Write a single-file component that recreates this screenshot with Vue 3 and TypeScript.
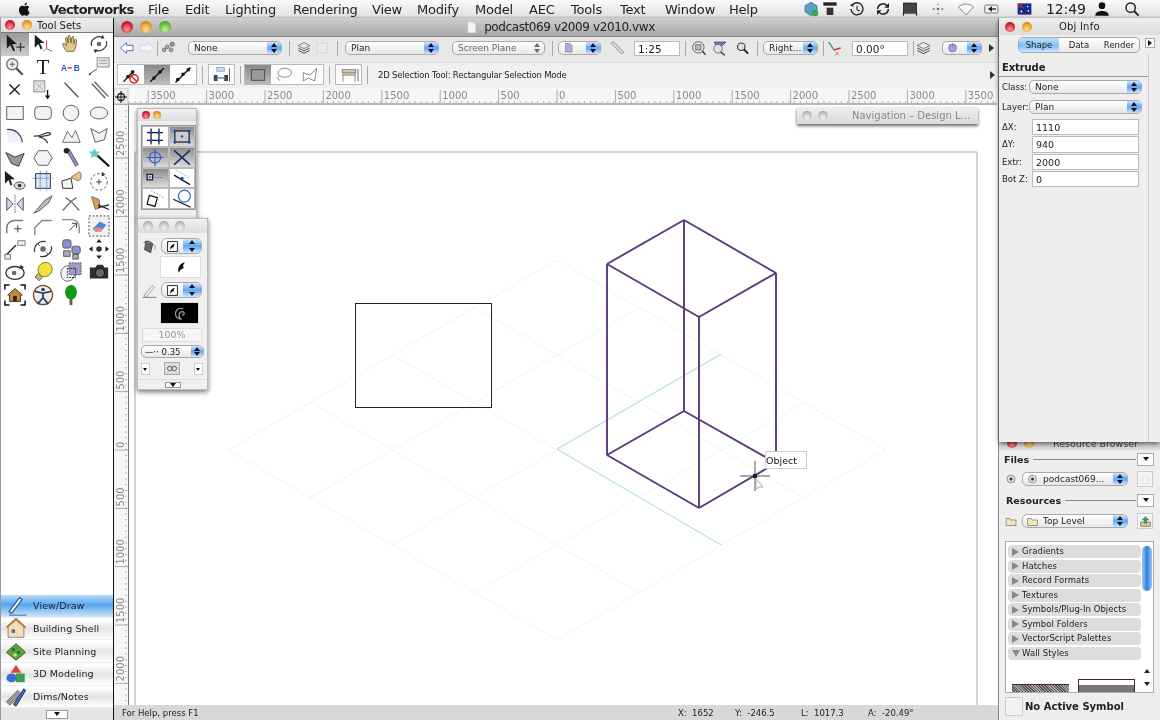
<script setup lang="ts">
type Item = { k: string; x: number; w: number; t?: string; ic?: string; lead?: string; plain?: boolean };

const I: Record<string, string> = {
  select: '<path d="M3 2v15l4-4 3 7 2-1-3-7h5z" fill="#1c1c1c"/><path d="M18 11v9M13.500 15.500h9" stroke="#333" stroke-width="1.300" fill="none"/>',
  reshape: '<path d="M3 2v14l4-4 2.500 6 2-1-3-6h5z" fill="#1c1c1c"/><path d="M16 8v9" stroke="#b33"/><path d="M16 17l6 3" stroke="#27a"/><path d="M16 17l-4 3" stroke="#3a4"/>',
  hand: '<path d="M7 20c-2-3-4-6-4-8 0-1 2-1 3 1l1 1-1-8c0-2 2-2 2 0l1 5 0-7c0-2 2-2 2 0l1 7 1-6c0-2 2-2 2 0l0 7 1-4c1-2 2-1 2 0 0 5-1 9-3 12z" fill="#e3c58e" stroke="#6b5328" stroke-width=".9"/>',
  rotate: '<circle cx="12" cy="12" r="2.500" fill="#667"/><path d="M4 14c-2-7 6-12 12-9M20 9c2 7-6 12-12 10" fill="none" stroke="#333" stroke-width="1.300"/><path d="M16 2l2 4-4 0zM8 22l-2-4 4 0z" fill="#333"/>',
  zoom: '<circle cx="9" cy="9" r="6" fill="#eef" stroke="#777" stroke-width="1.500"/><path d="M13.500 13.500l7 7" stroke="#555" stroke-width="2.500"/><path d="M9 6v6M6 9h6" stroke="#555"/>',
  text: '<text x="12" y="20" text-anchor="middle" font-family="Liberation Serif, serif" font-size="23" fill="#222">T</text>',
  ab: '<text x="1" y="16" font-family="Liberation Sans, sans-serif" font-size="9" fill="#25c" font-weight="700">A</text><path d="M8 13h5" stroke="#d33" stroke-width="1.500"/><text x="15" y="16" font-family="Liberation Sans, sans-serif" font-size="9" fill="#25c" font-weight="700">B</text>',
  note: '<rect x="10" y="2" width="13" height="10" fill="#e8e8e8" stroke="#888"/><path d="M12 5h9M12 8h9" stroke="#999"/><path d="M1 20l9-6" stroke="#444"/><circle cx="2" cy="20" r="1" fill="#222"/>',
  x: '<path d="M6 6l11 11M17 6L6 17" stroke="#222" stroke-width="1.600"/>',
  boxdown: '<rect x="2" y="2" width="12" height="12" fill="#e4e4e4" stroke="#888"/><path d="M4 4l8 8M12 4l-8 8" stroke="#aaa"/><path d="M17 12v9" stroke="#111" stroke-width="1.500"/><path d="M14 18h6l-3 4z" fill="#111"/>',
  line: '<path d="M5 4l15 16" stroke="#555" stroke-width="1.500"/>',
  dline: '<path d="M4 5l15 16M7 3l15 16" stroke="#666" stroke-width="1.500"/>',
  rect: '<rect x="3" y="5" width="18" height="14" fill="#f3f3f7" stroke="#555"/>',
  rrect: '<rect x="3" y="5" width="18" height="14" rx="4" fill="#f3f3f7" stroke="#555"/>',
  circle: '<circle cx="12" cy="12" r="8.500" fill="#f3f3f7" stroke="#555"/>',
  ellipse: '<ellipse cx="12" cy="12" rx="9.500" ry="6.500" fill="#f3f3f7" stroke="#555"/>',
  arc: '<path d="M3 6c9-1 16 5 17 14H5z" fill="#eef" stroke="none"/><path d="M3 6c9-1 16 5 17 14" fill="none" stroke="#444" stroke-width="1.300"/>',
  free: '<path d="M2 13c6 2 14-6 18-3 2 3-10 3-12 4 4 1 8 3 9 7" fill="none" stroke="#333" stroke-width="1.300"/>',
  polyline: '<path d="M3 20L8 8l5 7 4-8 5 13z" fill="#f1f1f5" stroke="#666"/>',
  polygon: '<path d="M3 5l9 5 9-5-3 12-10 3z" fill="#f1f1f5" stroke="#555"/>',
  dpoly: '<path d="M2 6l10 5 10-4-6 14-8-3z" fill="#999" stroke="#333"/>',
  hex: '<path d="M7 4h10l5 8-5 8H7l-5-8z" fill="#f3f3f7" stroke="#555"/>',
  dropper: '<path d="M6 4l4-2 3 5 7 12-3 2-7-12z" fill="#9a84c4" stroke="#444" stroke-width=".8"/><circle cx="7" cy="4" r="3" fill="#222"/>',
  wand: '<path d="M10 9l13 12" stroke="#111" stroke-width="2.500"/><path d="M7 1l2 4 4 0-3 3 1 4-4-2-4 2 1-4-3-3 4 0z" fill="#6cc"/>',
  eye: '<path d="M1 1v14l4-4 2 6 2-1-2-6h5z" fill="#1c1c1c"/><ellipse cx="17" cy="17" rx="6" ry="4" fill="#ddd" stroke="#444"/><circle cx="17" cy="17" r="2" fill="#333"/>',
  boxblue: '<rect x="4" y="4" width="16" height="16" fill="#dce6f2" stroke="#225"/><path d="M9 1v22M16 1v22M1 9h22" stroke="#48c" stroke-dasharray="2 1" fill="none"/>',
  handpoly: '<path d="M2 12l10-3 2 11H3z" fill="#f4f4f4" stroke="#222"/><path d="M12 8l9-6c3 1 3 8-1 10z" fill="#e3c58e" stroke="#6b5328" stroke-width=".8"/>',
  rotc: '<circle cx="12" cy="13" r="9" fill="none" stroke="#555" stroke-dasharray="3 2"/><path d="M12 10v6M9 13h6" stroke="#333"/><path d="M15 2l4 3-4 2z" fill="#333"/>',
  mirror: '<path d="M12 2v20" stroke="#567" stroke-dasharray="2 1"/><path d="M3 5l7 7-7 7zM21 5l-7 7 7 7z" fill="#d0d6e6" stroke="#445"/>',
  knife: '<path d="M2 22L14 8l8-5-4 8-11 9z" fill="#bbb" stroke="#555"/>',
  chev: '<path d="M3 19L12 9l9 10M6 5l6 4 6-4" fill="none" stroke="#777" stroke-width="1.600"/>',
  scissor: '<path d="M4 4l8 3 1 9-5 2z" fill="#d9a050" stroke="#765"/><path d="M11 16l12-3M11 13l12 5" stroke="#222" stroke-width="1.300"/>',
  fillet: '<path d="M3 20v-6c0-5 4-8 9-8h9" fill="none" stroke="#777" stroke-width="1.600"/><path d="M15 11v8M11 15h8" stroke="#333"/>',
  chamfer: '<path d="M3 22v-8l8-8h11" fill="none" stroke="#888" stroke-width="1.500"/>',
  filletb: '<path d="M2 5h11c5 0 8 4 8 9v6" fill="none" stroke="#888" stroke-width="1.500"/><path d="M10 17l7-7M13 9h5v5" fill="none" stroke="#333"/>',
  eraser: '<rect x="1" y="1" width="22" height="22" fill="#f2f2f2" stroke="#333" stroke-dasharray="2 2"/><path d="M5 15l8-8 7 4-6 7H8z" fill="#4a86d8"/><path d="M5 15l3 3h6l2-3-5-2z" fill="#e88"/>',
  wline: '<path d="M1 20l12-12" stroke="#222" stroke-width="1.500"/><rect x="15" y="3" width="8" height="5" fill="#eee" stroke="#777"/><rect x="1" y="18" width="6" height="5" fill="#eee" stroke="#777"/>',
  orbit: '<circle cx="12" cy="12" r="3" fill="#667"/><path d="M3 15C1 9 8 2 15 4M21 9c2 6-5 13-12 11" fill="none" stroke="#333" stroke-width="1.300"/><path d="M6 6l3 3M18 18l-3-3" stroke="#667"/>',
  group: '<rect x="3" y="2" width="9" height="9" rx="2" fill="#8a92cc" stroke="#555"/><rect x="13" y="9" width="9" height="8" rx="2" fill="#8a92cc" stroke="#555"/><rect x="4" y="14" width="7" height="6" fill="#aab" stroke="#555"/><rect x="14" y="18" width="6" height="5" fill="#aab" stroke="#555"/>',
  move4: '<circle cx="12" cy="12" r="3" fill="#333"/><path d="M12 1l3 4H9zM12 23l3-4H9zM1 12l4-3v6zM23 12l-4-3v6z" fill="#222"/>',
  fly: '<ellipse cx="12" cy="13" rx="10" ry="7" fill="none" stroke="#333" stroke-width="1.400"/><circle cx="11" cy="13" r="2.500" fill="#667"/><path d="M18 4l4 3-5 2z" fill="#333"/>',
  bulb: '<g transform="rotate(40 12 12)"><ellipse cx="12" cy="8.500" rx="7.500" ry="8" fill="#f4e23c" stroke="#8a7c14"/><rect x="9" y="16.500" width="6" height="5.500" fill="#c8b860" stroke="#776"/></g>',
  teapot: '<path d="M1 13c0-5 5-8 9-8s7 4 6 9-3 8-8 8-7-5-7-9z" fill="#f8f8f8" stroke="#555"/><path d="M10 2h13v13H10z" fill="#a29ac0" stroke="#556" stroke-dasharray="2 1"/><path d="M8 8h9v10H8z" fill="none" stroke="#223" stroke-dasharray="2 1"/>',
  camera: '<path d="M2 7h6l2-3h6l2 3h4v12H2z" fill="#2e2e2e"/><circle cx="13" cy="13" r="5" fill="#666" stroke="#111"/>',
  house: '<path d="M1 6V1h5M18 1h5v5M23 18v5h-5M6 23H1v-5" fill="none" stroke="#111" stroke-width="1.600"/><path d="M4 12l8-7 8 7h-2v7H6v-7z" fill="#c08a42" stroke="#4a2f10"/><rect x="10" y="13" width="4" height="6" fill="#3a2408"/>',
  vitr: '<circle cx="12" cy="12" r="10.500" fill="#f4eee0" stroke="#6b4a22" stroke-width="1.400"/><circle cx="12" cy="6" r="2" fill="#26447a"/><path d="M3 8l9 2 9-2M12 10v5M12 15l-6 7M12 15l6 7" stroke="#26447a" stroke-width="2" fill="none"/>',
  tree: '<rect x="10.500" y="14" width="3" height="9" fill="#6a5a2a"/><ellipse cx="12" cy="9" rx="6.500" ry="8" fill="#129a18"/>',
  pen: '<path d="M4 19L16 3l3 2L7 21z" fill="#fff" stroke="#2a5a9c" stroke-width="1.400"/><path d="M4 23h20" stroke="#2a5a9c"/>',
  bshell: '<path d="M3 10L12 2l9 8v12H3z" fill="#f2e0bc" stroke="#876"/><path d="M1 11L12 1l11 10" fill="none" stroke="#b97b32" stroke-width="2.200"/><rect x="7" y="13" width="4" height="4" fill="#667"/>',
  site: '<path d="M1 13L12 3l11 10-11 9z" fill="#5da336" stroke="#5a4a22"/><circle cx="9" cy="10" r="2" fill="#174"/><circle cx="15" cy="13" r="2" fill="#174"/><circle cx="11" cy="16" r="2" fill="#cda"/>',
  model: '<path d="M6 11l6-9 6 9z" fill="#d8423c"/><path d="M12 22l0-10 10 0 0 10z" fill="#3aa04a"/><ellipse cx="7" cy="17" rx="6" ry="5" fill="#3a6fd0"/>',
  dims: '<path d="M1 18L14 5l4 4L5 22z" fill="#999" stroke="#666"/><path d="M9 21L21 3l2 2L12 23z" fill="#3a6fd0" stroke="#224"/>',
  back: '<path d="M2 12l9-8v4h10v8H11v4z" fill="#fff" stroke="#4a58b8" stroke-width="1.300"/>',
  fwd: '<path d="M22 12l-9-8v4H3v8h10v4z" fill="#f6f6fa" stroke="#d4d6ea" stroke-width="1.300"/>',
  classes: '<circle cx="18" cy="6" r="3.500" fill="#999" stroke="#555"/><circle cx="10" cy="10" r="3" fill="#aaa" stroke="#555"/><circle cx="16" cy="15" r="3" fill="#aaa" stroke="#555"/><circle cx="5" cy="15" r="3" fill="#aaa" stroke="#555"/>',
  layers: '<path d="M12 3l10 5-10 5L2 8z" fill="#eee" stroke="#333"/><path d="M2 12l10 5 10-5M2 16l10 5 10-5" fill="none" stroke="#333" stroke-width="1.400"/>',
  dis: '<rect x="3" y="4" width="18" height="16" fill="#eee" stroke="#ccc"/><path d="M8 8h8v8H8z" fill="none" stroke="#ddd"/>',
  ruler: '<path d="M3 5l3-3 16 16-3 3z" fill="#ddd" stroke="#666"/>',
  zm1: '<circle cx="11" cy="11" r="8.500" fill="#eee" stroke="#444" stroke-width="1.300"/><path d="M7 7h8v8H7z" fill="#bbb" stroke="#444"/><path d="M17 17l5 5" stroke="#333" stroke-width="2"/>',
  zm2: '<path d="M3 3h18L10 14z" fill="#6b7ac0" stroke="#345"/><circle cx="9" cy="13" r="6.500" fill="#dde" stroke="#444"/><path d="M13 18l6 5" stroke="#333" stroke-width="2"/>',
  zm3: '<circle cx="10" cy="10" r="6" fill="#dde" stroke="#333" stroke-width="1.800"/><path d="M14 14l7 7" stroke="#222" stroke-width="3"/>',
  axes: '<path d="M4 3l8 12" stroke="#2a8a6a" stroke-width="2"/><path d="M12 15l10-3" stroke="#c33" stroke-width="2"/><path d="M14 18l5 5M19 18l-5 5" stroke="#c33"/>',
  page: '<path d="M6 3h9l4 4v13H6z" fill="#b8a8de" stroke="#6a5aa0"/>',
  flower: '<circle cx="12" cy="12" r="8" fill="#a99ad8" stroke="#6a5aa0"/><path d="M7 4v5M12 2v7M17 4v5" stroke="#6a5aa0"/>',
  noM: '<path d="M2 21L16 6" stroke="#222" stroke-width="2"/><circle cx="8" cy="14" r="2.500" fill="#222"/><circle cx="14" cy="8" r="2.500" fill="#222"/><circle cx="16" cy="17" r="5.500" fill="#fff" stroke="#d22" stroke-width="2"/><path d="M12 13l8 8" stroke="#d22" stroke-width="2"/>',
  two: '<path d="M3 21L21 3" stroke="#111" stroke-width="2"/><rect x="6" y="14" width="4" height="4" fill="#111"/><rect x="14" y="6" width="4" height="4" fill="#111"/>',
  three: '<path d="M2 22L22 2" stroke="#111" stroke-width="2"/><rect x="3" y="16" width="4" height="4" fill="#111"/><rect x="10" y="9" width="4" height="4" fill="#111"/><rect x="17" y="3" width="4" height="4" fill="#111"/>',
  mrect: '<rect x="3" y="5" width="18" height="14" fill="#9a9a9a" stroke="#333"/>',
  mlasso: '<ellipse cx="13" cy="9" rx="9" ry="6" fill="#fff" stroke="#666"/><path d="M6 13c-3 1-3 6 1 6" fill="none" stroke="#666"/>',
  mpoly: '<path d="M3 9l9 3 9-9-3 17-8-4-7 4z" fill="#fff" stroke="#666"/>',
  wallh: '<rect x="3" y="5" width="18" height="4" fill="#ccc" stroke="#666"/><path d="M4 9v12M20 9v12M3 12h18" stroke="#666"/><rect x="4" y="9" width="16" height="4" fill="#c8b48c"/><path d="M24 4v16" stroke="#333"/>',
  dimh: '<rect x="5" y="2" width="10" height="5" fill="#bde" stroke="#79b"/><rect x="1" y="12" width="5" height="8" fill="#444"/><rect x="15" y="12" width="5" height="8" fill="#444"/><path d="M6 16h9" stroke="#58c" stroke-width="2"/><path d="M22 3v18" stroke="#333"/>',
  apple: '<path d="M16.500 12.800c0-2.500 2-3.600 2.100-3.700-1.200-1.700-3-1.900-3.600-2-1.500-.2-3 .9-3.800.9s-2-.9-3.300-.9c-1.700 0-3.300 1-4.100 2.500-1.800 3-.5 7.600 1.200 10 .8 1.200 1.800 2.600 3.100 2.500 1.200 0 1.700-.8 3.200-.8s1.900.8 3.200.8 2.200-1.200 3-2.400c1-1.400 1.300-2.700 1.400-2.800-.1 0-2.400-1-2.400-4.100zM14 5.400c.7-.8 1.100-1.900 1-3-.9 0-2.100.6-2.800 1.400-.6.700-1.100 1.800-1 2.900 1.100.1 2.100-.5 2.800-1.300z" fill="#111"/>',
  globe: '<path d="M12 2l9 5v9l-9 6-9-6V7z" fill="#5aa0c8" stroke="#2a5a78"/><circle cx="18" cy="18" r="5" fill="#3aa84a"/>',
  lamp: '<path d="M2 2h20v5H2z" fill="#222"/><path d="M7 10h10v11H7z" fill="#333"/>',
  tm: '<path d="M5 6a9 9 0 1 1-2 6" fill="none" stroke="#222" stroke-width="2"/><path d="M1 6l5-2 1 5z" fill="#222"/><path d="M12 7v6l4 2" stroke="#222" stroke-width="1.600" fill="none"/>',
  sync: '<path d="M4 12a8 8 0 0 1 14-5M20 12a8 8 0 0 1-14 5" fill="none" stroke="#222" stroke-width="2.400"/><path d="M21 3v7h-7zM3 21v-7h7z" fill="#222"/>',
  screen: '<rect x="2" y="3" width="20" height="14" fill="#444" stroke="#111"/><path d="M2 17v5M22 17v5" stroke="#111" stroke-width="1.500"/><path d="M2 19h20" stroke="#111"/>',
  bt: '<circle cx="12" cy="12" r="2" fill="#666"/><path d="M12 4v2M12 18v2M4 12h3M17 12h3" stroke="#777" stroke-width="2"/>',
  wifi: '<path d="M1 9c6-6 16-6 22 0L12 21z" fill="#fafafa" stroke="#555"/>',
  batt: '<rect x="1" y="6" width="20" height="12" rx="2" fill="#eee" stroke="#444"/><path d="M6 12l6-4v8z" fill="#222"/><path d="M12 11h6v2h-6z" fill="#222"/>',
  flag: '<rect x="1" y="3" width="22" height="18" fill="#1a2a8a"/><path d="M1 3l10 8M11 3L1 11" stroke="#e33" stroke-width="1.500"/><circle cx="17" cy="8" r="1.300" fill="#fff"/><circle cx="18" cy="15" r="1.300" fill="#fff"/><circle cx="7" cy="16" r="1.500" fill="#fff"/>',
  user: '<circle cx="12" cy="7" r="5" fill="#111"/><path d="M2 22c0-6 6-7 10-7s10 1 10 7z" fill="#111"/>',
  spot: '<circle cx="10" cy="10" r="7" fill="none" stroke="#222" stroke-width="2.200"/><path d="M15 15l7 7" stroke="#222" stroke-width="2.800"/>',
  grid: '<path d="M2 7h20M2 17h20M7 2v20M17 2v20" stroke="#111" stroke-width="1.500"/><g fill="#1a4ac8"><circle cx="7" cy="7" r="2"/><circle cx="17" cy="7" r="2"/><circle cx="7" cy="17" r="2"/><circle cx="17" cy="17" r="2"/></g>',
  rbox: '<rect x="3" y="5" width="18" height="14" fill="#ccc" stroke="#111" stroke-width="1.400"/><g fill="#1a4ac8"><circle cx="3" cy="5" r="2"/><circle cx="21" cy="5" r="2"/><circle cx="3" cy="19" r="2"/><circle cx="21" cy="19" r="2"/><circle cx="12" cy="12" r="1.500"/></g>',
  cross: '<circle cx="12" cy="12" r="7" fill="none" stroke="#2a5ac8" stroke-width="1.400"/><path d="M12 1v22M1 12h22" stroke="#2a5ac8" stroke-width="1.400"/>',
  bx: '<path d="M2 3l20 18M2 21L22 3" stroke="#1a2a5a" stroke-width="1.800"/>',
  dashb: '<rect x="2" y="8" width="7" height="7" fill="#ccd" stroke="#111" stroke-width="1.400"/><rect x="4.500" y="10.500" width="2" height="2" fill="#24c"/><path d="M11 12h12" stroke="#36c" stroke-dasharray="2 2"/>',
  bline: '<path d="M2 9l20 12" stroke="#111" stroke-width="1.600"/><path d="M5 3l15 9" stroke="#58c" stroke-dasharray="2 2"/><circle cx="12" cy="13" r="2" fill="#24c"/>',
  sq: '<path d="M5 8l10 3-3 11-10-3z" fill="#fff" stroke="#111" stroke-width="1.500"/><path d="M7 2l16 9" stroke="#58c" stroke-dasharray="2 2"/>',
  cl: '<circle cx="15" cy="9" r="7.500" fill="none" stroke="#2a6ac8" stroke-width="1.500"/><path d="M1 13l22 10" stroke="#111" stroke-width="1.600"/>',
  paint: '<path d="M6 5l11 3-3 14-10-5z" fill="#666" stroke="#222"/><path d="M3 6c2-4 11-3 14 2" fill="none" stroke="#222" stroke-width="1.500"/><path d="M17 8c5 2 5 8 3 10" stroke="#888" fill="none" stroke-width="1.500"/>',
  pencil: '<path d="M3 20L16 4l4 3L7 22z" fill="#eee" stroke="#777"/><path d="M1 23h22" stroke="#777" stroke-width="1.500"/>',
  doc: '<circle cx="12" cy="12" r="8" fill="#ddd" stroke="#555"/><circle cx="12" cy="12" r="3" fill="#335"/>',
  folder: '<path d="M2 7h7l2 3h11v11H2z" fill="#f2e6b8" stroke="#444"/>',
  homeD: '<path d="M3 12L12 4l9 8M6 11v9h12v-9" fill="none" stroke="#ddd" stroke-width="1.400"/>',
  upfolder: '<path d="M3 13h18v8H3z" fill="#d8cc90" stroke="#444"/><path d="M12 3l6 6h-4v6h-4V9H6z" fill="#3aa84a" stroke="#265"/>',
  swatchA: '<rect x="3" y="3" width="18" height="18" fill="#fff" stroke="#111" stroke-width="1.600"/><path d="M8 18c-1-6 3-10 9-11-3 3-3 5-2 6-2 0-5 2-7 5z" fill="#111"/>',
  link: '<path d="M2 12a5 5 0 0 1 10 0 5 5 0 0 1-10 0M12 12a5 5 0 0 1 10 0 5 5 0 0 1-10 0" fill="none" stroke="#555" stroke-width="2"/>'
};

const tools: string[] = [
  'select','reshape','hand','rotate','zoom','text','ab','note','x','boxdown','line','dline',
  'rect','rrect','circle','ellipse','arc','free','polyline','polygon','dpoly','hex','dropper','wand',
  'eye','boxblue','handpoly','rotc','mirror','knife','chev','scissor','fillet','chamfer','filletb','eraser',
  'wline','orbit','group','move4','fly','bulb','teapot','camera','house','vitr','tree'
];

const sets = [
  { t: 'View/Draw', ic: 'pen', on: true },
  { t: 'Building Shell', ic: 'bshell', on: false },
  { t: 'Site Planning', ic: 'site', on: false },
  { t: '3D Modeling', ic: 'model', on: false },
  { t: 'Dims/Notes', ic: 'dims', on: false }
];

const menuX = [49, 148, 185, 225, 293, 372, 417, 475, 529, 571, 620, 665, 729, 803];
const menuT = ['Vectorworks','File','Edit','Lighting','Rendering','View','Modify','Model','AEC','Tools','Text','Window','Help'];
const menus = menuT.map((t, i) => ({ t, w: menuX[i + 1] - menuX[i] }));
const trayIcons = [
  { ic: 'globe', w: 19 }, { ic: 'lamp', w: 27 }, { ic: 'tm', w: 26 }, { ic: 'sync', w: 27 },
  { ic: 'screen', w: 28 }, { ic: 'bt', w: 28 }, { ic: 'wifi', w: 26 }, { ic: 'batt', w: 33 }
];

const raw: Item[] = [
  { k: 'i', x: 119, w: 16, ic: 'back' }, { k: 'i', x: 139, w: 16, ic: 'fwd' }, { k: 's', x: 157, w: 1 },
  { k: 'i', x: 161, w: 15, ic: 'classes' }, { k: 'p', x: 188, w: 94, t: 'None' }, { k: 's', x: 289, w: 1 },
  { k: 'i', x: 297, w: 14, ic: 'layers' }, { k: 'i', x: 316, w: 13, ic: 'dis' }, { k: 's', x: 337, w: 1 },
  { k: 'p', x: 345, w: 94, t: 'Plan' }, { k: 'p', x: 452, w: 93, t: 'Screen Plane', plain: true }, { k: 's', x: 552, w: 1 },
  { k: 'p', x: 558, w: 43, lead: 'page' }, { k: 'i', x: 609, w: 16, ic: 'ruler' }, { k: 'f', x: 634, w: 46, t: '1:25' },
  { k: 's', x: 685, w: 1 }, { k: 'i', x: 691, w: 16, ic: 'zm1' }, { k: 'i', x: 712, w: 16, ic: 'zm2' },
  { k: 'i', x: 735, w: 15, ic: 'zm3' }, { k: 's', x: 757, w: 1 }, { k: 'p', x: 763, w: 55, t: 'Right...' },
  { k: 's', x: 823, w: 1 }, { k: 'i', x: 826, w: 16, ic: 'axes' }, { k: 'f', x: 852, w: 56, t: '0.00°' },
  { k: 's', x: 913, w: 1 }, { k: 'i', x: 916, w: 15, ic: 'layers' }, { k: 'p', x: 942, w: 40, lead: 'flower' },
  { k: 'a', x: 989, w: 5 }
];
const bar = raw.map((it, i) => {
  const prev = i ? raw[i - 1].x + raw[i - 1].w : 114;
  return { ...it, ml: it.x - prev };
});

const topTicks = Array.from({ length: 15 }, (_, i) => {
  const v = i - 7;
  return { x: 557 + v * 58.4, t: String(Math.abs(v) * 500) };
});
const minorTop = Array.from({ length: 152 }, (_, i) => 129 + i * 5.84);
const leftLabels = [
  { y: 158, t: '2500' }, { y: 216.6, t: '2000' }, { y: 275, t: '1500' }, { y: 333.4, t: '1000' },
  { y: 391.6, t: '500' }, { y: 450, t: '0' }, { y: 508.4, t: '500' }, { y: 566.6, t: '1000' },
  { y: 625, t: '1500' }, { y: 683.4, t: '2000' }
];
const minorLeft = Array.from({ length: 104 }, (_, i) => 105 + i * 5.84);

const L = [228, 450], T = [557, 260], R = [886, 450], B = [557, 640];
const lerp = (a: number[], b: number[], f: number) => [a[0] + (b[0] - a[0]) * f, a[1] + (b[1] - a[1]) * f];
const grid: number[][] = [];
for (let i = 0; i <= 4; i++) {
  const f = i / 4;
  grid.push([...lerp(L, T, f), ...lerp(B, R, f)]);
  grid.push([...lerp(L, B, f), ...lerp(T, R, f)]);
}
const box = [
  [684,220,607,264],[684,220,776,273],[607,264,699,317],[776,273,699,317],
  [607,264,607,455],[684,220,684,411],[699,317,699,508],[776,273,776,463],
  [607,455,684,411],[684,411,776,463],[607,455,699,508],[699,508,776,463]
];

const resources = ['Gradients','Hatches','Record Formats','Textures','Symbols/Plug-In Objects','Symbol Folders','VectorScript Palettes','Wall Styles'];
const objRows = [
  { l: 'ΔX:', v: '1110' }, { l: 'ΔY:', v: '940' }, { l: 'Extr:', v: '2000' }, { l: 'Bot Z:', v: '0' }
];
const paletteA = [
  { ic: 'grid', on: false }, { ic: 'rbox', on: true }, { ic: 'cross', on: true }, { ic: 'bx', on: true },
  { ic: 'dashb', on: true }, { ic: 'bline', on: false }, { ic: 'sq', on: false }, { ic: 'cl', on: false }
];
</script>

<template>
  <div class="desk">
    <header class="menubar">
      <svg class="apple" viewBox="0 0 24 24" v-html="I.apple"></svg>
      <span v-for="(m, i) in menus" :key="m.t" class="menu" :class="{ brand: i === 0 }" :style="{ width: m.w + 'px' }">{{ m.t }}</span>
      <svg v-for="t in trayIcons" :key="t.ic" class="tray" viewBox="0 0 24 24" :style="{ marginRight: t.w - 16 + 'px' }" v-html="I[t.ic]"></svg>
      <svg class="tray flag" viewBox="0 0 24 24" v-html="I.flag"></svg>
      <span class="clock">12:49</span>
      <svg class="tray user" viewBox="0 0 24 24" v-html="I.user"></svg>
      <svg class="tray spot" viewBox="0 0 24 24" v-html="I.spot"></svg>
    </header>

    <div class="work">
      <aside class="toolsets">
        <div class="ts-title">
          <i class="light red"></i><i class="light orange"></i><span>Tool Sets</span>
        </div>
        <div class="tools">
          <div v-for="(t, i) in tools" :key="i" class="tool" :class="{ pressed: i === 0 }">
            <svg viewBox="0 0 24 24" v-html="I[t]"></svg>
          </div>
        </div>
        <div class="sets">
          <div v-for="s in sets" :key="s.t" class="set" :class="{ on: s.on }">
            <svg viewBox="0 0 24 24" v-html="I[s.ic]"></svg><span>{{ s.t }}</span>
          </div>
        </div>
        <div class="ts-foot"><span class="down-btn"></span></div>
      </aside>

      <main class="win">
        <div class="titlebar">
          <i class="light big red"></i><i class="light big orange"></i><i class="light big green"></i>
          <div class="doc-title">
            <svg viewBox="0 0 24 24"><path d="M5 2h10l5 5v15H5z" fill="#f4f4f4" stroke="#bbb"/></svg>
            <span>podcast069 v2009 v2010.vwx</span>
          </div>
        </div>

        <div class="bar1">
          <template v-for="(b, i) in bar" :key="i">
            <svg v-if="b.k === 'i'" class="bi" viewBox="0 0 24 24" :style="{ marginLeft: b.ml + 'px', width: b.w + 'px' }" v-html="I[b.ic!]"></svg>
            <i v-else-if="b.k === 's'" class="sep" :style="{ marginLeft: b.ml + 'px' }"></i>
            <div v-else-if="b.k === 'p'" class="pop" :class="{ plain: b.plain }" :style="{ marginLeft: b.ml + 'px', width: b.w + 'px' }">
              <svg v-if="b.lead" class="lead" viewBox="0 0 24 24" v-html="I[b.lead]"></svg>
              <span class="pop-t">{{ b.t }}</span>
              <b class="arrows"><u></u><s></s></b>
            </div>
            <div v-else-if="b.k === 'f'" class="field" :style="{ marginLeft: b.ml + 'px', width: b.w + 'px' }">{{ b.t }}</div>
            <i v-else class="tri" :style="{ marginLeft: b.ml + 'px' }"></i>
          </template>
        </div>

        <div class="bar2">
          <div class="seg">
            <button class="sb"><svg viewBox="0 0 24 24" v-html="I.noM"></svg></button>
            <button class="sb dn"><svg viewBox="0 0 24 24" v-html="I.two"></svg></button>
            <button class="sb"><svg viewBox="0 0 24 24" v-html="I.three"></svg></button>
          </div>
          <i class="sep s2"></i>
          <div class="seg one"><button class="sb wide"><svg viewBox="0 0 24 24" v-html="I.dimh"></svg></button></div>
          <i class="sep s2 s3"></i>
          <div class="seg g2">
            <button class="sb dn"><svg viewBox="0 0 24 24" v-html="I.mrect"></svg></button>
            <button class="sb"><svg viewBox="0 0 24 24" v-html="I.mlasso"></svg></button>
            <button class="sb"><svg viewBox="0 0 24 24" v-html="I.mpoly"></svg></button>
          </div>
          <i class="sep s2"></i>
          <div class="seg one"><button class="sb wide"><svg viewBox="0 0 24 24" v-html="I.wallh"></svg></button></div>
          <i class="sep s2"></i>
          <span class="mode">2D Selection Tool: Rectangular Selection Mode</span>
          <i class="tri end"></i>
        </div>

        <div class="ruler-top">
          <svg viewBox="114 88 883 17" width="883" height="17">
            <g stroke="#999" stroke-width=".7">
              <line v-for="x in minorTop" :key="x" :x1="x" :x2="x" y1="101" y2="103" />
            </g>
            <g v-for="t in topTicks" :key="t.x">
              <line :x1="t.x" :x2="t.x" y1="90" y2="103" stroke="#999" stroke-width=".8" />
              <text :x="t.x + 2" y="99" class="rt">{{ t.t }}</text>
            </g>
            <line x1="114" x2="997" y1="104" y2="104" stroke="#777" />
            <rect x="114" y="88" width="14" height="16" fill="#eee" stroke="#999" stroke-width=".5" />
            <circle cx="121" cy="97" r="3.500" fill="none" stroke="#111" stroke-width="1.300" />
            <path d="M121 91v12M115 97h12" stroke="#111" />
          </svg>
        </div>

        <div class="mid">
          <svg class="ruler-left" viewBox="114 105 15 600" width="15" height="600">
            <g stroke="#999" stroke-width=".7">
              <line v-for="y in minorLeft" :key="y" x1="125" x2="127" :y1="y" :y2="y" />
            </g>
            <g v-for="l in leftLabels" :key="l.y">
              <line x1="115" x2="128" :y1="l.y" :y2="l.y" stroke="#999" stroke-width=".8" />
              <text class="rt" :transform="`translate(124 ${l.y - 2}) rotate(-90)`">{{ l.t }}</text>
            </g>
            <line x1="128.500" x2="128.500" y1="105" y2="705" stroke="#777" />
          </svg>

          <div class="canvas">
            <svg class="draw" viewBox="129 105 868 600" width="868" height="600">
              <path d="M135 705V152H977V705" fill="none" stroke="#aaa" />
              <line v-for="(g, i) in grid" :key="i" :x1="g[0]" :y1="g[1]" :x2="g[2]" :y2="g[3]" stroke="#edf7f7" />
              <path d="M721 354L557 449L721 545" fill="none" stroke="#a9d8ea" />
              <rect x="355.500" y="303.500" width="136" height="104" fill="none" stroke="#222" />
              <line v-for="(e, i) in box" :key="'b' + i" :x1="e[0]" :y1="e[1]" :x2="e[2]" :y2="e[3]" stroke="#5a3a78" stroke-width="1.900" />
              <rect x="765.500" y="451.500" width="41" height="17" fill="#fff" stroke="#ccc" />
              <text x="766" y="464" class="tip">Object</text>
              <path d="M740 476h30M755 461v30" stroke="#555" />
              <rect x="753" y="474" width="4" height="4" fill="#124" />
              <path d="M756 479v10l3-2 4 0z" fill="#fff" stroke="#aaa" />
            </svg>

            <section class="pal pal-a">
              <div class="pal-head"><i class="light red sm"></i><i class="light orange sm"></i></div>
              <div class="pal-grid">
                <div v-for="(c, i) in paletteA" :key="i" class="pg" :class="{ on: c.on }">
                  <svg viewBox="0 0 24 24" v-html="I[c.ic]"></svg>
                </div>
              </div>
            </section>

            <section class="pal pal-b">
              <div class="pal-head g"><i class="light grey"></i><i class="light grey"></i><i class="light grey"></i></div>
              <div class="attr-row">
                <svg class="attr-ic" viewBox="0 0 24 24" v-html="I.paint"></svg>
                <div class="pop blk"><svg class="lead sw" viewBox="0 0 24 24" v-html="I.swatchA"></svg><span class="pop-t"></span><b class="arrows"><u></u><s></s></b></div>
              </div>
              <div class="swatch w"><svg viewBox="0 0 24 24"><path d="M8 22c-3-9 3-17 11-18-4 4-4 8-2 10-3 0-7 3-9 8z" fill="#111"/></svg></div>
              <div class="attr-row r2">
                <svg class="attr-ic" viewBox="0 0 24 24" v-html="I.pencil"></svg>
                <div class="pop blk"><svg class="lead sw" viewBox="0 0 24 24" v-html="I.swatchA"></svg><span class="pop-t"></span><b class="arrows"><u></u><s></s></b></div>
              </div>
              <div class="swatch k"><svg viewBox="0 0 24 24"><path d="M17 6a8 8 0 1 0-4 15c-4-5-3-11 3-11 3 0 3 6-1 5" fill="none" stroke="#999" stroke-width="2"/></svg></div>
              <div class="opac">100%</div>
              <div class="pop thick"><span class="pop-t">—·· 0.35</span><b class="arrows"><u></u><s></s></b></div>
              <div class="link-row">
                <span class="mini"></span>
                <button class="lk"><svg viewBox="0 0 24 24" v-html="I.link"></svg></button>
                <span class="mini"></span>
              </div>
              <div class="pal-foot"><span class="down-btn"></span></div>
            </section>

            <section class="nav-pal">
              <i class="light grey"></i><i class="light grey"></i>
              <span>Navigation – Design L...</span>
            </section>
          </div>
        </div>

        <footer class="status">
          <span class="help">For Help, press F1</span>
          <span class="st x">X: &nbsp;1652</span>
          <span class="st y">Y: &nbsp;-246.5</span>
          <span class="st l">L: &nbsp;1017.3</span>
          <span class="st a">A: &nbsp;-20.49°</span>
        </footer>
      </main>

      <div class="right">
        <section class="obj">
          <div class="obj-title"><i class="light red"></i><i class="light orange"></i><span>Obj Info</span></div>
          <div class="tabs-row">
            <div class="tabs"><span class="tab on">Shape</span><span class="tab">Data</span><span class="tab">Render</span></div>
            <i class="tab-menu"></i>
          </div>
          <div class="obj-body">
            <h3>Extrude</h3>
            <div class="lab-row"><label>Class:</label><div class="pop"><span class="pop-t">None</span><b class="arrows"><u></u><s></s></b></div></div>
            <div class="lab-row"><label>Layer:</label><div class="pop"><span class="pop-t">Plan</span><b class="arrows"><u></u><s></s></b></div></div>
            <div class="fields">
              <div v-for="r in objRows" :key="r.l" class="f-row"><label>{{ r.l }}</label><div class="ofield">{{ r.v }}</div></div>
            </div>
          </div>
        </section>

        <section class="res">
          <div class="res-title"><i class="light red"></i><i class="light orange"></i><span>Resource Browser</span></div>
          <div class="res-head"><b>Files</b><i class="rule"></i><span class="menu-btn"></span></div>
          <div class="res-row">
            <svg class="ri" viewBox="0 0 24 24" v-html="I.doc"></svg>
            <div class="pop"><svg class="lead" viewBox="0 0 24 24" v-html="I.doc"></svg><span class="pop-t">podcast069...</span><b class="arrows"><u></u><s></s></b></div>
            <span class="res-btn"><svg viewBox="0 0 24 24" v-html="I.homeD"></svg></span>
          </div>
          <div class="res-head h2"><b>Resources</b><i class="rule"></i><span class="menu-btn"></span></div>
          <div class="res-row">
            <svg class="ri" viewBox="0 0 24 24" v-html="I.folder"></svg>
            <div class="pop"><svg class="lead" viewBox="0 0 24 24" v-html="I.folder"></svg><span class="pop-t">Top Level</span><b class="arrows"><u></u><s></s></b></div>
            <span class="res-btn"><svg viewBox="0 0 24 24" v-html="I.upfolder"></svg></span>
          </div>
          <div class="res-list">
            <div class="res-items">
              <div v-for="(r, i) in resources" :key="r" class="ri-row">
                <i class="disc" :class="{ open: i === resources.length - 1 }"></i>{{ r }}
              </div>
              <div class="thumbs">
                <div class="th a"></div>
                <div class="th b"></div>
              </div>
            </div>
            <div class="scroll">
              <div class="thumb"></div>
              <div class="sc-arrows"><i class="up"></i><i class="dn"></i></div>
            </div>
          </div>
          <div class="res-foot"><span class="nosym"></span><b>No Active Symbol</b></div>
        </section>
      </div>
    </div>
  </div>
</template>

<style scoped>
.desk {
  width: 1160px; height: 720px; overflow: hidden; display: flex; flex-direction: column;
  font-family: "DejaVu Sans", sans-serif; color: #222; background: #fff; filter: blur(.45px);
}
i, b, u, s { display: block; text-decoration: none; font-style: normal; }
.menubar {
  height: 18px; flex: none; display: flex; align-items: center; font-size: 13px;
  background: linear-gradient(#fafafa, #e4e4e4 85%, #bbb); position: relative; z-index: 3;
}
.apple { width: 16px; height: 16px; margin: 0 16px 0 17px; flex: none; }
.menu { flex: none; white-space: nowrap; letter-spacing: -.2px; color: #222; }
.brand { font-weight: 700; letter-spacing: -.6px; }
.tray { width: 16px; height: 16px; flex: none; }
.flag { margin-right: 14px; width: 15px; }
.clock { font-size: 14px; width: 48px; flex: none; letter-spacing: -.1px; }
.user { margin-right: 14px; }

.work { flex: 1; min-height: 0; display: flex; }
.toolsets { width: 114px; flex: none; display: flex; flex-direction: column; background: #fff; border-right: 1px solid #111; box-sizing: border-box; border-left: 1px solid #999; }
.ts-title { height: 14px; flex: none; display: flex; align-items: center; padding-left: 4px; gap: 7px; background: linear-gradient(#eee, #ddd); font-size: 10px; border-bottom: 1px solid #777; }
.ts-title span { margin-left: -2px; }
.light { width: 10px; height: 10px; border-radius: 50%; flex: none; }
.light.big { width: 12px; height: 12px; }
.light.sm { width: 8px; height: 8px; }
.red { background: radial-gradient(circle at 50% 70%, #ff9a9a, #d42030 60%, #801018); }
.orange { background: radial-gradient(circle at 50% 70%, #ffe0a0, #e89a28 60%, #a06410); }
.green { background: radial-gradient(circle at 50% 70%, #c8f0a0, #60b838 60%, #2c7a18); }
.grey { background: radial-gradient(circle at 50% 70%, #f6f6f6, #bbb 65%, #777); }
.tools { display: grid; grid-template-columns: repeat(4, 28px); grid-auto-rows: 22.750px; height: 562px; flex: none; align-content: start; }
.tool { display: flex; align-items: center; justify-content: center; }
.tool svg { width: 22px; height: 22px; }
.pressed { background: linear-gradient(#999, #ccc); }
.sets { display: flex; flex-direction: column; flex: none; }
.set { height: 22.700px; display: flex; align-items: center; font-size: 9.500px; background: linear-gradient(#fff 10%, #e4e4e4 50%, #fff); border-bottom: 1px solid #eee; box-sizing: border-box; letter-spacing: .1px; color: #223; }
.set svg { width: 22px; height: 21px; margin: 0 6px 0 4px; flex: none; }
.set.on { background: linear-gradient(#b8dcf8, #55a6ee 45%, #d2e8fa); }
.ts-foot { flex: 1; min-height: 0; display: flex; align-items: center; justify-content: center; background: #e6e6e6; }
.down-btn { width: 20px; height: 7px; background: #fff; border: 1px solid #999; position: relative; display: block; }
.down-btn::after { content: ""; position: absolute; left: 7px; top: 1px; border: 3px solid transparent; border-top: 4px solid #111; border-bottom: 0; }

.win { flex: 1; min-width: 0; display: flex; flex-direction: column; background: #fff; }
.titlebar { height: 19px; box-sizing: border-box; flex: none; display: flex; align-items: center; gap: 7px; padding-left: 7px; background: linear-gradient(#cfcfcf, #a8a8a8); border-bottom: 1px solid #888; position: relative; }
.doc-title { flex: 1; display: flex; justify-content: center; align-items: center; gap: 6px; font-size: 12px; letter-spacing: -.4px; color: #222; padding-right: 56px; }
.doc-title svg { width: 13px; height: 13px; }
.bar1 { height: 25px; flex: none; display: flex; align-items: center; background: #e8e8e8; padding-bottom: 3px; box-sizing: border-box; }
.bi { height: 16px; flex: none; }
.sep { width: 1px; height: 15px; background: #aaa; flex: none; }
.tri { width: 0; height: 0; border-left: 5px solid #333; border-top: 4px solid transparent; border-bottom: 4px solid transparent; flex: none; }
.pop { height: 14px; flex: none; box-sizing: border-box; display: flex; align-items: center; border: 1px solid #aaa; border-radius: 5px; background: linear-gradient(#fff, #e6e6e6); font-size: 9px; overflow: hidden; }
.pop-t { flex: 1; padding-left: 5px; white-space: nowrap; overflow: hidden; color: #222; }
.lead { width: 13px; height: 12px; margin-left: 3px; flex: none; }
.arrows { width: 14px; height: 100%; flex: none; background: linear-gradient(#cfe6ff, #5ea6f2 50%, #cfe6ff); position: relative; }
.arrows u, .arrows s { position: absolute; left: 4px; width: 0; height: 0; border-left: 3px solid transparent; border-right: 3px solid transparent; }
.arrows u { top: 1px; border-bottom: 4px solid #112; }
.arrows s { bottom: 1px; border-top: 4px solid #112; }
.pop.plain { color: #666; }
.pop.plain .pop-t { color: #666; }
.pop.plain .arrows { background: none; }
.pop.plain .arrows u { border-bottom-color: #666; }
.pop.plain .arrows s { border-top-color: #666; }
.field { height: 15px; flex: none; box-sizing: border-box; background: #fff; border: 1px solid #bbb; font-size: 10.500px; line-height: 14px; padding-left: 3px; }

.bar2 { height: 26px; flex: none; display: flex; align-items: center; background: #f0f0f0; padding: 0 0 2px 3px; box-sizing: border-box; border-top: 1px solid #ddd; }
.seg { display: flex; border: 1px solid #bbb; background: #fdfdfd; height: 21px; box-sizing: border-box; flex: none; }
.sb { width: 26px; height: 100%; padding: 0; margin: 0; border: 0; background: none; display: flex; align-items: center; justify-content: center; }
.sb svg { width: 20px; height: 18px; }
.sb.dn { background: linear-gradient(#888, #bbb); }
.sb.wide { width: 25px; }
.s2 { margin: 0 5px; height: 18px; }
.s3 { margin-right: 3px; }
.mode { font-size: 8.500px; margin-left: 5px; white-space: nowrap; letter-spacing: -.2px; flex: 1; }
.tri.end { margin-right: 3px; }
.ruler-top { height: 17px; flex: none; background: #f6f6f6; }
.ruler-top svg, .ruler-left { display: block; }
.rt { font-family: "DejaVu Sans", sans-serif; font-size: 10px; fill: #888; }
.mid { flex: 1; min-height: 0; display: flex; }
.ruler-left { flex: none; background: #f6f6f6; }
.canvas { flex: 1; position: relative; background: #fff; overflow: hidden; }
.draw { display: block; }
.tip { font-family: "DejaVu Sans", sans-serif; font-size: 9.500px; fill: #111; }
.pal { position: absolute; background: #eee; box-shadow: 0 2px 5px rgba(0, 0, 0, .55); border: 1px solid #bbb; box-sizing: border-box; }
.pal-a { left: 8px; top: 3px; width: 60px; height: 112px; }
.pal-head { height: 12px; display: flex; align-items: center; gap: 3px; padding-left: 4px; background: linear-gradient(#f2f2f2, #dcdcdc); }
.pal-grid { margin: 4px 3px 0; display: grid; grid-template-columns: repeat(2, 26.500px); grid-auto-rows: 20.750px; border: 1px solid #999; background: #fff; width: fit-content; }
.pg { display: flex; align-items: center; justify-content: center; box-sizing: border-box; border: .5px solid #bbb; }
.pg svg { width: 22px; height: 19px; }
.pg.on { background: linear-gradient(#8c8c8c, #dcdcdc); }
.pal-b { left: 8px; top: 113px; width: 71px; height: 172px; background: #f0f0f0; display: flex; flex-direction: column; align-items: flex-start; }
.pal-head.g { height: 14px; width: 100%; gap: 6px; padding-left: 5px; box-sizing: border-box; flex: none; }
.attr-row { display: flex; align-items: center; height: 16px; margin-top: 5px; flex: none; }
.attr-row.r2 { margin-top: 4px; }
.attr-ic { width: 15px; height: 15px; margin: 0 4px 0 4px; flex: none; }
.pop.blk { width: 41px; height: 16px; border-radius: 6px; }
.sw { width: 13px; height: 13px; margin-left: 4px; }
.blk .pop-t { padding: 0; }
.blk .arrows { width: 18px; }
.blk .arrows u, .blk .arrows s { left: 6px; }
.swatch { margin: 2px 0 0 22px; width: 41px; height: 22px; background: #fff; border: 1px solid #ddd; box-sizing: border-box; display: flex; align-items: center; justify-content: center; flex: none; }
.swatch svg { width: 14px; height: 14px; }
.swatch.k { background: #000; margin-top: 4px; width: 39px; }
.swatch.k svg { width: 16px; height: 16px; }
.opac { margin: 4px 0 0 4px; width: 60px; height: 14px; flex: none; box-sizing: border-box; border: 1px solid #ddd; text-align: center; font-size: 9.500px; line-height: 12px; color: #999; background: #f6f6f6; }
.pop.thick { margin: 3px 0 0 3px; width: 63px; height: 13px; }
.thick .pop-t { padding-left: 3px; font-size: 8.500px; }
.thick .arrows { width: 12px; }
.thick .arrows u, .thick .arrows s { left: 3px; }
.link-row { display: flex; align-items: center; justify-content: space-between; width: 62px; margin: 4px 0 0 3px; flex: none; }
.mini { width: 9px; height: 12px; background: #fff; border: 1px solid #ccc; box-sizing: border-box; position: relative; display: block; }
.mini::after { content: ""; position: absolute; left: 1px; top: 4px; border: 2.500px solid transparent; border-top: 3px solid #111; border-bottom: 0; }
.lk { width: 16px; height: 13px; padding: 0; background: #ddd; border: 1px solid #aaa; display: flex; align-items: center; justify-content: center; }
.lk svg { width: 12px; height: 11px; }
.pal-foot { width: 100%; margin-top: 4px; padding-top: 2px; border-top: 1px solid #ddd; display: flex; justify-content: center; flex: none; }
.pal-foot .down-btn { width: 14px; height: 4px; }
.pal-foot .down-btn::after { left: 4px; top: 0; }
.nav-pal { position: absolute; left: 668px; top: 2px; width: 181px; height: 17px; box-sizing: border-box; display: flex; align-items: center; gap: 6px; padding-left: 5px; background: linear-gradient(#efefef, #dadada); box-shadow: 0 2px 3px rgba(0, 0, 0, .6); font-size: 10px; color: #888; white-space: nowrap; }
.nav-pal span { margin-left: 18px; }
.status { height: 15px; flex: none; display: flex; align-items: center; background: #d8d8d8; font-size: 8.500px; }
.help { width: 564px; padding-left: 8px; box-sizing: border-box; flex: none; }
.st { flex: none; white-space: nowrap; }
.st.x { width: 57px; }
.st.y { width: 66px; }
.st.l { width: 67px; }

.right { width: 162px; flex: none; display: flex; flex-direction: column; border-left: 1px solid #888; box-sizing: border-box; position: relative; }
.obj { height: 424px; flex: none; background: #eee; box-shadow: 0 2px 5px rgba(0, 0, 0, .6); position: relative; z-index: 1; display: flex; flex-direction: column; }
.obj-title { height: 17px; flex: none; display: flex; align-items: center; gap: 7px; padding-left: 6px; position: relative; font-size: 10px; background: linear-gradient(#eee, #ddd); }
.obj-title span { margin-left: 20px; letter-spacing: .2px; }
.tabs-row { height: 19px; display: flex; align-items: center; padding-left: 19px; flex: none; position: relative; }
.tabs { display: flex; width: 122px; height: 16px; box-sizing: border-box; border: 1px solid #aaa; border-radius: 5px; background: linear-gradient(#fff, #e8e8e8); overflow: hidden; font-size: 8.500px; }
.tab { flex: 1; text-align: center; line-height: 14px; }
.tab.on { background: linear-gradient(#bfe0ff, #7fbdf5 55%, #cfe6ff); }
.tab-menu { width: 10px; height: 10px; margin-left: 5px; margin-top: -4px; box-sizing: border-box; border: 1px solid #aaa; background: #fff; position: relative; }
.tab-menu::after { content: ""; position: absolute; left: 2px; top: 1px; border-left: 4px solid #111; border-top: 3px solid transparent; border-bottom: 3px solid transparent; }
.obj-body { flex: 1; width: 150px; border-right: 1px solid #ccc; box-sizing: border-box; }
.obj-body h3 { margin: 0; font-size: 10px; height: 23px; line-height: 27px; padding-left: 3px; border-bottom: 1px solid #999; box-sizing: border-box; letter-spacing: -.1px; }
.lab-row { display: flex; align-items: center; height: 14px; margin-top: 6px; }
.lab-row:first-of-type { margin-top: 3px; }
.lab-row label { width: 30px; padding-left: 3px; font-size: 8.500px; box-sizing: border-box; flex: none; }
.lab-row .pop { width: 113px; }
.fields { margin-top: 5px; display: flex; flex-direction: column; gap: 1px; }
.f-row { display: flex; align-items: center; height: 16.300px; }
.f-row label { width: 33px; padding-left: 3px; box-sizing: border-box; font-size: 8.500px; flex: none; }
.ofield { width: 107px; height: 16.300px; box-sizing: border-box; background: #fff; border: 1px solid #bbb; font-size: 9.500px; line-height: 15px; padding-left: 3px; }

.res { flex: 1; min-height: 0; background: #eee; display: flex; flex-direction: column; box-sizing: border-box; }
.res-title { height: 14px; margin: -6px 0 3px; flex: none; display: flex; align-items: center; gap: 7px; padding-left: 8px; font-size: 9.500px; background: #ddd; color: #444; }
.res-title span { margin-left: 12px; }
.res-head { display: flex; align-items: center; height: 13px; padding-left: 5px; font-size: 9.500px; flex: none; }
.res-head.h2 { padding-left: 7px; margin-top: 7px; }
.res-head b { flex: none; }
.rule { flex: 1; height: 1px; background: #888; margin: 0 1px 0 4px; }
.menu-btn { width: 17px; height: 13px; box-sizing: border-box; background: #fff; border: 1px solid #aaa; flex: none; margin-right: 6px; position: relative; display: block; }
.menu-btn::after { content: ""; position: absolute; left: 5px; top: 3px; border: 3px solid transparent; border-top: 4px solid #111; border-bottom: 0; }
.res-row { display: flex; align-items: center; height: 16px; margin-top: 5px; flex: none; }
.res-head.h2 + .res-row { margin-top: 6px; }
.ri { width: 12px; height: 12px; margin-left: 6px; flex: none; }
.res-row .pop { width: 106px; margin-left: 5px; }
.res-row .pop-t { padding-left: 4px; }
.res-btn { width: 16px; height: 16px; margin-left: 9px; box-sizing: border-box; border: 1px solid #ccc; background: #f4f4f4; display: flex; align-items: center; justify-content: center; flex: none; }
.res-btn svg { width: 13px; height: 13px; }
.res-list { margin: 12px 0 0 6px; width: 149px; height: 152px; flex: none; border: 1px solid #aaa; background: #fff; box-sizing: border-box; display: flex; overflow: hidden; }
.res-items { flex: 1; padding: 3px 1px 0 2px; min-width: 0; display: flex; flex-direction: column; gap: 1.500px; }
.ri-row { height: 13px; flex: none; background: #ddd; border-radius: 4px; font-size: 8.500px; line-height: 13px; display: flex; align-items: center; white-space: nowrap; letter-spacing: .05px; }
.disc { width: 0; height: 0; margin: 0 3px 0 4px; border-left: 7px solid #888; border-top: 4px solid transparent; border-bottom: 4px solid transparent; flex: none; }
.disc.open { border-left: 4px solid transparent; border-right: 4px solid transparent; border-top: 7px solid #888; border-bottom: 0; margin-right: 2px; }
.thumbs { display: flex; align-items: flex-end; gap: 9px; padding: 18px 0 0 4px; flex: none; }
.th { width: 57px; box-sizing: border-box; border-top: 1px solid #50203a; background: repeating-linear-gradient(45deg, #555 0 1px, #aaa 1px 2px); }
.th.a { height: 9px; }
.th.b { height: 14px; border: 1px solid #50203a; background: linear-gradient(#fff 40%, #777 40%); }
.scroll { width: 10px; flex: none; margin-right: 1px; display: flex; flex-direction: column; padding-top: 4px; }
.thumb { height: 45px; border-radius: 5px; background: linear-gradient(90deg, #9cc8f4, #2f7ee0, #9cc8f4); flex: none; }
.sc-arrows { margin-top: auto; height: 25px; display: flex; flex-direction: column; justify-content: space-around; align-items: center; padding-bottom: 2px; }
.sc-arrows .up { border: 3px solid transparent; border-bottom: 4px solid #222; border-top: 0; width: 0; }
.sc-arrows .dn { border: 3px solid transparent; border-top: 4px solid #222; border-bottom: 0; width: 0; }
.res-foot { display: flex; align-items: center; flex: 1; padding-left: 6px; font-size: 10px; }
.nosym { width: 18px; height: 19px; box-sizing: border-box; border: 1px solid #ccc; background: #f2f2f2; margin-right: 2px; flex: none; }
button { font: inherit; }
</style>

<style>
html, body { margin: 0; background: #fff; }
</style>
